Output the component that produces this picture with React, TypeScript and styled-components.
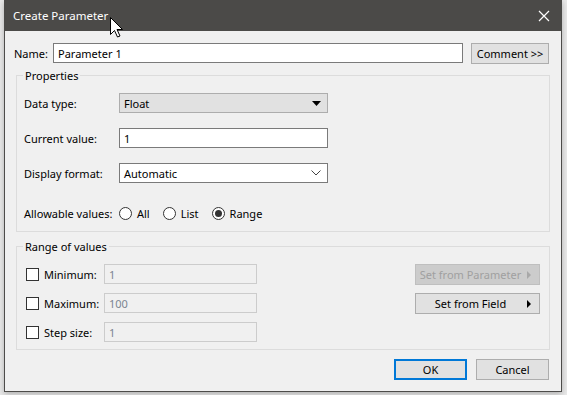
import React from 'react';
import styled, { createGlobalStyle } from 'styled-components';

const GlobalStyle = createGlobalStyle`
  html, body {
    margin: 0;
    padding: 0;
    background: #e9e9e9;
  }
  body {
    font-family: 'Noto Sans', 'Open Sans', sans-serif;
    font-size: 11px;
    color: #000;
  }
`;

const Page = styled.div`
  position: relative;
  width: 567px;
  height: 395px;
  overflow: hidden;
`;

const Window = styled.div`
  margin-left: 4px;
  width: 558px;
  height: 392px;
  box-sizing: border-box;
  display: flex;
  flex-direction: column;
  background: #f0f0f0;
  border: 1px solid #4d4c4a;
  border-top: none;
  box-shadow: 0 2px 6px rgba(0, 0, 0, 0.25);
`;

const TitleBar = styled.div`
  height: 31px;
  flex: none;
  margin: 0 -1px;
  display: flex;
  align-items: center;
  justify-content: space-between;
  padding: 0 10px 0 9px;
  background: #4b4a48;
  color: #fff;
  font-size: 11.5px;
`;

const CloseIcon = styled.svg`
  width: 12px;
  height: 12px;
  margin-right: 2px;
`;

const Body = styled.div`
  flex: 1;
  display: flex;
  flex-direction: column;
  padding: 12px 12px 0 9px;
`;

const NameRow = styled.div`
  display: flex;
  align-items: center;
  gap: 8px;
  height: 20px;
`;

const Label = styled.span<{ $w?: number }>`
  width: ${(p) => (p.$w ? `${p.$w}px` : 'auto')};
  flex: none;
  white-space: nowrap;
`;

const TextBox = styled.div<{ $w?: number; $disabled?: boolean }>`
  box-sizing: border-box;
  height: 20px;
  width: ${(p) => (p.$w ? `${p.$w}px` : 'auto')};
  flex: ${(p) => (p.$w ? 'none' : '1')};
  display: flex;
  align-items: center;
  padding: 0 4px;
  background: ${(p) => (p.$disabled ? '#f0f0f0' : '#fff')};
  border: 1px solid ${(p) => (p.$disabled ? '#cccccc' : '#7a7a7a')};
  color: ${(p) => (p.$disabled ? '#7a8590' : '#000')};
`;

const Button = styled.div<{ $w: number; $disabled?: boolean; $default?: boolean; $arrow?: boolean }>`
  box-sizing: border-box;
  width: ${(p) => p.$w}px;
  height: 21px;
  flex: none;
  display: flex;
  align-items: center;
  justify-content: center;
  position: relative;
  padding-right: ${(p) => (p.$arrow ? '14px' : '0')};
  background: ${(p) => (p.$disabled ? '#cccccc' : '#e1e1e1')};
  border: ${(p) => (p.$default ? '2px solid #0078d7' : `1px solid ${p.$disabled ? '#bfbfbf' : '#adadad'}`)};
  color: ${(p) => (p.$disabled ? '#a0a0a0' : '#000')};
`;

const ButtonArrow = styled.span<{ $disabled?: boolean }>`
  position: absolute;
  right: 8px;
  top: 6px;
  width: 0;
  height: 0;
  border-top: 4px solid transparent;
  border-bottom: 4px solid transparent;
  border-left: 4px solid ${(p) => (p.$disabled ? '#a8a8a8' : '#000')};
`;

const Gap = styled.div<{ $h: number }>`
  height: ${(p) => p.$h}px;
  flex: none;
`;

const Group = styled.div<{ $h: number }>`
  position: relative;
  box-sizing: border-box;
  height: ${(p) => p.$h}px;
  margin-left: 2px;
  margin-right: -1px;
  border: 1px solid #dcdcdc;
  display: flex;
  flex-direction: column;
`;

const GroupCaption = styled.span`
  position: absolute;
  top: -8px;
  left: 6px;
  padding: 0 2px;
  background: #f0f0f0;
`;

const PropRows = styled.div`
  display: flex;
  flex-direction: column;
  gap: 15px;
  padding: 17px 0 0 7px;
`;

const PropRow = styled.div`
  display: flex;
  align-items: center;
  height: 20px;
`;

const Select = styled.div<{ $flat?: boolean }>`
  box-sizing: border-box;
  width: 209px;
  height: 20px;
  display: flex;
  align-items: center;
  justify-content: space-between;
  padding: 0 6px 0 4px;
  background: ${(p) => (p.$flat ? '#e1e1e1' : '#fff')};
  border: 1px solid ${(p) => (p.$flat ? '#adadad' : '#7a7a7a')};
`;

const RadioRow = styled.div`
  display: flex;
  align-items: center;
  height: 20px;
  margin-top: 20px;
  padding-left: 7px;
`;

const RadioItem = styled.span`
  display: flex;
  align-items: center;
  gap: 5px;
  margin-right: 13px;
`;

const RadioCircle = styled.span<{ $on?: boolean }>`
  box-sizing: border-box;
  width: 13px;
  height: 13px;
  border-radius: 50%;
  border: 1px solid #333;
  background: #fff;
  display: flex;
  align-items: center;
  justify-content: center;
  &::after {
    content: '';
    display: ${(p) => (p.$on ? 'block' : 'none')};
    width: 7px;
    height: 7px;
    border-radius: 50%;
    background: #333;
  }
`;

const RangeBody = styled.div`
  display: flex;
  justify-content: space-between;
  padding: 17px 9px 0 9px;
`;

const RangeFields = styled.div`
  display: flex;
  flex-direction: column;
  gap: 9px;
`;

const RangeRow = styled.div`
  display: flex;
  align-items: center;
  height: 20px;
`;

const CheckBox = styled.span`
  box-sizing: border-box;
  width: 13px;
  height: 13px;
  margin-right: 5px;
  border: 1px solid #333;
  background: #fff;
  flex: none;
`;

const RangeButtons = styled.div`
  display: flex;
  flex-direction: column;
  gap: 8px;
`;

const Footer = styled.div`
  display: flex;
  justify-content: flex-end;
  gap: 9px;
  margin-top: 9px;
`;

const Cursor = styled.svg`
  position: absolute;
  left: 110px;
  top: 17px;
  width: 13px;
  height: 21px;
`;

export default function App() {
  return (
    <Page>
      <GlobalStyle />
      <Window>
        <TitleBar>
          <span>Create Parameter</span>
          <CloseIcon viewBox="0 0 12 12">
            <path d="M1 1L11 11M11 1L1 11" stroke="#fff" strokeWidth="1.2" />
          </CloseIcon>
        </TitleBar>
        <Body>
          <NameRow>
            <Label $w={31}>Name:</Label>
            <TextBox>Parameter 1</TextBox>
            <Button $w={78}>Comment &gt;&gt;</Button>
          </NameRow>

          <Gap $h={12} />
          <Group $h={157}>
            <GroupCaption>Properties</GroupCaption>
            <PropRows>
              <PropRow>
                <Label $w={95}>Data type:</Label>
                <Select $flat>
                  <span>Float</span>
                  <svg width="9" height="5" viewBox="0 0 9 5">
                    <path d="M0 0H9L4.5 5Z" fill="#000" />
                  </svg>
                </Select>
              </PropRow>
              <PropRow>
                <Label $w={95}>Current value:</Label>
                <TextBox $w={209}>1</TextBox>
              </PropRow>
              <PropRow>
                <Label $w={95}>Display format:</Label>
                <Select>
                  <span>Automatic</span>
                  <svg width="10" height="6" viewBox="0 0 10 6">
                    <path d="M0.5 0.5L5 5L9.5 0.5" fill="none" stroke="#444" />
                  </svg>
                </Select>
              </PropRow>
            </PropRows>
            <RadioRow>
              <Label $w={95}>Allowable values:</Label>
              <RadioItem>
                <RadioCircle />
                All
              </RadioItem>
              <RadioItem>
                <RadioCircle />
                List
              </RadioItem>
              <RadioItem>
                <RadioCircle $on />
                Range
              </RadioItem>
            </RadioRow>
          </Group>

          <Gap $h={14} />
          <Group $h={104}>
            <GroupCaption>Range of values</GroupCaption>
            <RangeBody>
              <RangeFields>
                <RangeRow>
                  <CheckBox />
                  <Label $w={60}>Minimum:</Label>
                  <TextBox $w={153} $disabled>1</TextBox>
                </RangeRow>
                <RangeRow>
                  <CheckBox />
                  <Label $w={60}>Maximum:</Label>
                  <TextBox $w={153} $disabled>100</TextBox>
                </RangeRow>
                <RangeRow>
                  <CheckBox />
                  <Label $w={60}>Step size:</Label>
                  <TextBox $w={153} $disabled>1</TextBox>
                </RangeRow>
              </RangeFields>
              <RangeButtons>
                <Button $w={125} $disabled $arrow>
                  Set from Parameter
                  <ButtonArrow $disabled />
                </Button>
                <Button $w={125} $arrow>
                  Set from Field
                  <ButtonArrow />
                </Button>
              </RangeButtons>
            </RangeBody>
          </Group>

          <Footer>
            <Button $w={73} $default>OK</Button>
            <Button $w={73}>Cancel</Button>
          </Footer>
        </Body>
      </Window>
      <Cursor viewBox="0 0 13 21">
        <path
          d="M0.5 0.5V17.5L4.5 13.5L7.5 20L10 19L7 12.5H12.5Z"
          fill="#fff"
          stroke="#000"
          strokeWidth="1"
          strokeLinejoin="round"
        />
      </Cursor>
    </Page>
  );
}
